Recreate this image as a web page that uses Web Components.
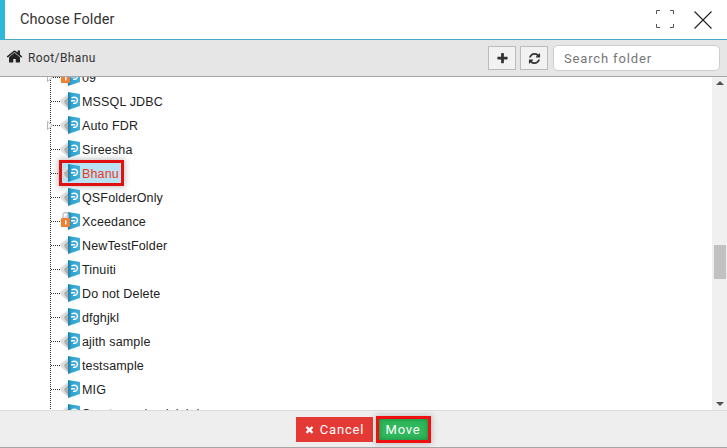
<!DOCTYPE html>
<html>
<head>
<meta charset="utf-8">
<style>
  html, body { margin: 0; padding: 0; background: #fff; }
  body { font-family: Roboto, "Liberation Sans", sans-serif; }
</style>
</head>
<body>
<folder-dialog>
  <dialog-header slot="header" title-text="Choose Folder"></dialog-header>
  <dialog-toolbar slot="toolbar" path="Root/Bhanu"></dialog-toolbar>
  <folder-tree slot="tree">
    <tree-node label="09" locked expander></tree-node>
    <tree-node label="MSSQL JDBC"></tree-node>
    <tree-node label="Auto FDR" expander></tree-node>
    <tree-node label="Sireesha"></tree-node>
    <tree-node label="Bhanu" selected></tree-node>
    <tree-node label="QSFolderOnly"></tree-node>
    <tree-node label="Xceedance" locked></tree-node>
    <tree-node label="NewTestFolder"></tree-node>
    <tree-node label="Tinuiti"></tree-node>
    <tree-node label="Do not Delete"></tree-node>
    <tree-node label="dfghjkl"></tree-node>
    <tree-node label="ajith sample"></tree-node>
    <tree-node label="testsample"></tree-node>
    <tree-node label="MIG"></tree-node>
    <tree-node label="Sourtnameingdoinh b"></tree-node>
  </folder-tree>
  <dialog-footer slot="footer"></dialog-footer>
</folder-dialog>

<script>
const ICONS = {
  home: 'M1472 992v480q0 26-19 45t-45 19h-384v-384h-256v384h-384q-26 0-45-19t-19-45v-480q0-1 .5-3t.5-3l575-474 575 474q1 2 1 6zm223-69l-62 74q-8 9-21 11h-3q-13 0-21-7l-692-577-692 577q-12 8-24 7-13-2-21-11l-62-74q-8-10-7-23.500t11-21.500l719-599q32-26 76-26t76 26l244 204v-195q0-14 9-23t23-9h192q14 0 23 9t9 23v408l219 182q10 8 11 21.500t-7 23.500z',
  plus: 'M1600 736v192q0 40-28 68t-68 28h-416v416q0 40-28 68t-68 28h-192q-40 0-68-28t-28-68v-416h-416q-40 0-68-28t-28-68v-192q0-40 28-68t68-28h416v-416q0-40 28-68t68-28h192q40 0 68 28t28 68v416h416q40 0 68 28t28 68z',
  refresh: 'M1639 1056q0 5-1 7-64 268-268 434.500t-478 166.500q-146 0-282.500-55t-243.500-157l-129 129q-19 19-45 19t-45-19-19-45v-448q0-26 19-45t45-19h448q26 0 45 19t19 45-19 45l-137 137q71 66 161 102t187 36q134 0 250-65t186-179q11-17 53-117 8-23 30-23h192q13 0 22.500 9.500t9.500 22.500zm25-800v448q0 26-19 45t-45 19h-448q-26 0-45-19t-19-45 19-45l138-138q-148-137-349-137-134 0-250 65t-186 179q-11 17-53 117-8 23-30 23h-199q-13 0-22.500-9.500t-9.500-22.500v-7q65-268 270-434.500t480-166.500q146 0 284 55.500t245 156.500l130-129q19-19 45-19t45 19 19 45z',
  times: 'M1490 1322q0 40-28 68l-136 136q-28 28-68 28t-68-28l-294-294-294 294q-28 28-68 28t-68-28l-136-136q-28-28-28-68t28-68l294-294-294-294q-28-28-28-68t28-68l136-136q28-28 68-28t68 28l294 294 294-294q28-28 68-28t68 28l136 136q28 28 28 68t-28 68l-294 294 294 294q28 28 28 68z'
};

function faIcon(name, size, color) {
  return `<svg width="${size}" height="${size}" viewBox="0 0 1792 1792" fill="${color}"><path d="${ICONS[name]}"/></svg>`;
}

class FolderDialog extends HTMLElement {
  constructor() {
    super();
    this.attachShadow({ mode: 'open' }).innerHTML = `
      <style>
        :host { display: flex; flex-direction: column; width: 727px; height: 448px; overflow: hidden; }
        .tree { flex: 1; min-height: 0; display: flex; }
      </style>
      <slot name="header"></slot>
      <slot name="toolbar"></slot>
      <div class="tree"><slot name="tree"></slot></div>
      <slot name="footer"></slot>`;
  }
}

class DialogHeader extends HTMLElement {
  constructor() {
    super();
    this.attachShadow({ mode: 'open' }).innerHTML = `
      <style>
        :host { display: flex; align-items: center; height: 39px; flex: none; background: #fff;
          border-bottom: 1px solid #4aa9c6; border-left: 5px solid #2db7d9; box-sizing: content-box; width: 722px; }
        h1 { margin: 0 0 0 15px; flex: 1; font: 400 14.5px Roboto, "Liberation Sans", sans-serif; color: #333; letter-spacing: .1px; }
        .full { margin: 0 20px 1px 0; display: block; }
        .close { margin: 1px 15px 0 0; display: block; }
      </style>
      <h1></h1>
      <svg class="full" width="18" height="18" viewBox="0 0 18 18" fill="none" stroke="#555" stroke-width="1">
        <path d="M.5 4V.5H4M14 .5h3.500V4M17.500 14v3.500H14M4 17.500H.5V14"/>
      </svg>
      <svg class="close" width="18" height="18" viewBox="0 0 18 18" fill="none" stroke="#222" stroke-width="1.100">
        <path d="M.5.5l17 17M17.500.5l-17 17"/>
      </svg>`;
    this.shadowRoot.querySelector('h1').textContent = this.getAttribute('title-text');
  }
}

class DialogToolbar extends HTMLElement {
  constructor() {
    super();
    this.attachShadow({ mode: 'open' }).innerHTML = `
      <style>
        :host { display: flex; align-items: center; flex: none; height: 36px; background: #e6e6e6;
          border-bottom: 1px solid #a6a6a6; padding: 0 7px 0 6px; font: 12px Roboto, "Liberation Sans", sans-serif; color: #333; }
        .home { display: block; margin-right: 5px; }
        .path { flex: 1; letter-spacing: .4px; }
        button { width: 28px; height: 24px; padding: 0; margin-right: 4px; background: #f2f2f2;
          border: 1px solid #bbb; display: flex; align-items: center; justify-content: center; }
        input { width: 167px; height: 26px; box-sizing: border-box; margin-left: 1px; padding: 0 10px;
          border: 1px solid #ccc; border-radius: 5px; background: #fff;
          font: 13px Roboto, "Liberation Sans", sans-serif; letter-spacing: .85px; }
        input::placeholder { color: #777; opacity: 1; }
      </style>
      <span class="home">${faIcon('home', 17, '#222')}</span>
      <span class="path"></span>
      <button>${faIcon('plus', 13, '#333')}</button>
      <button>${faIcon('refresh', 13, '#333')}</button>
      <input placeholder="Search folder">`;
    this.shadowRoot.querySelector('.path').textContent = this.getAttribute('path');
  }
}

class FolderTree extends HTMLElement {
  constructor() {
    super();
    this.attachShadow({ mode: 'open' }).innerHTML = `
      <style>
        :host { display: flex; flex: 1; min-width: 0; overflow: hidden; background: #fff; }
        .view { flex: 1; min-width: 0; overflow: hidden; }
        .rows { margin: -12px 0 0 50px; border-left: 1px dotted #333; }
      </style>
      <div class="view"><div class="rows"><slot></slot></div></div>
      <tree-scrollbar></tree-scrollbar>`;
  }
}

class TreeScrollbar extends HTMLElement {
  constructor() {
    super();
    this.attachShadow({ mode: 'open' }).innerHTML = `
      <style>
        :host { display: flex; flex-direction: column; align-items: center; flex: none; width: 15px; background: #f0f0f0; }
        .arrow { width: 0; height: 0; border-left: 4px solid transparent; border-right: 4px solid transparent; flex: none; }
        .up { margin-top: 4px; border-bottom: 4px solid #505050; }
        .down { margin: auto 0 4px; border-top: 4px solid #505050; }
        .thumb { width: 12px; height: 34px; margin-top: 160px; background: #c1c1c1; flex: none; }
      </style>
      <div class="arrow up"></div>
      <div class="thumb"></div>
      <div class="arrow down"></div>`;
  }
}

class TreeNode extends HTMLElement {
  constructor() {
    super();
    const locked = this.hasAttribute('locked');
    const expander = this.hasAttribute('expander');
    this.attachShadow({ mode: 'open' }).innerHTML = `
      <style>
        :host { display: flex; align-items: center; position: relative; height: 24px;
          font: 12.5px "Liberation Sans", Arial, sans-serif; letter-spacing: .15px; color: #222; white-space: nowrap; }
        .dash { width: 9px; border-top: 1px dotted #333; flex: none; }
        .node { display: flex; align-items: center; height: 20px; }
        svg.folder { display: block; flex: none; }
        .label { margin-left: 1px; padding-top: 2px; }
        .twisty { position: absolute; left: -4px; top: 8px; }
        :host([selected]) .node {
          margin-left: 2px; padding-right: 2px; background: #b9e2f2; color: #e8391f;
          outline: 3px solid #e01010; box-shadow: 0 0 6px 4px rgba(0,0,0,.25);
        }
        :host([selected]) svg.folder { margin-left: -2px; }
      </style>
      <span class="dash"></span>
      <span class="node">
        <svg class="folder" width="21" height="20" viewBox="0 0 21 20">
          <defs>
            <linearGradient id="blue" x1="0" y1="0" x2="1" y2="0">
              <stop offset="0" stop-color="#1e7fab"/>
              <stop offset=".3" stop-color="#31a3d0"/>
              <stop offset="1" stop-color="#3fb0db"/>
            </linearGradient>
          </defs>
          <path d="M8 3 0 9l1 3 7 6z" fill="#dedede"/>
          <path d="M8 6 4 10l1 3 3 3z" fill="#b0b0b0"/>
          <path d="M8 1 20 3v12L8 19z" fill="url(#blue)"/>
          <path d="M11.500 6.800c3-1 6-.5 6 2.200s-2.500 3.600-4.500 3.300M11 9.800h4.200" fill="none" stroke="#fff" stroke-width="1.400"/>
          ${locked ? `<path d="M3 7V4a2.500 2.500 0 0 1 5 0V7" fill="none" stroke="#c4c4c4" stroke-width="1.400"/>
            <rect x="1" y="7" width="9" height="9" rx="1" fill="#ee7f33"/>
            <rect x="5" y="9.500" width="1.500" height="4" fill="#fff"/>` : ''}
        </svg>
        <span class="label"></span>
      </span>
      ${expander ? `<svg class="twisty" width="6" height="9" viewBox="0 0 6 9"><path d="M.5.5 5.500 4.500 .5 8.500z" fill="#fff" stroke="#b5b5b5"/></svg>` : ''}`;
    this.shadowRoot.querySelector('.label').textContent = this.getAttribute('label');
  }
}

class DialogFooter extends HTMLElement {
  constructor() {
    super();
    this.attachShadow({ mode: 'open' }).innerHTML = `
      <style>
        :host { display: flex; justify-content: center; align-items: center; gap: 6px; flex: none; height: 36px;
          background: #eee; border-top: 1px solid #ddd; border-bottom: 1px solid #a6a6a6; padding-right: 4px;
          font: 13px Roboto, "Liberation Sans", sans-serif; letter-spacing: .8px; color: #fff; }
        button { font: inherit; letter-spacing: inherit; color: inherit; border: 0; display: flex; align-items: center; justify-content: center; padding: 0; }
        .cancel { width: 77px; height: 25px; background: #e53935; gap: 5px; }
        .move { width: 49px; height: 21px; background: #2fb85c; outline: 3px solid #ee1010; box-shadow: 0 0 6px 4px rgba(0,0,0,.2), inset 0 0 5px rgba(0,80,30,.5); }
      </style>
      <button class="cancel">${faIcon('times', 11, '#fff')}Cancel</button>
      <button class="move">Move</button>`;
  }
}

customElements.define('tree-scrollbar', TreeScrollbar);
customElements.define('tree-node', TreeNode);
customElements.define('folder-tree', FolderTree);
customElements.define('dialog-header', DialogHeader);
customElements.define('dialog-toolbar', DialogToolbar);
customElements.define('dialog-footer', DialogFooter);
customElements.define('folder-dialog', FolderDialog);
</script>
</body>
</html>
